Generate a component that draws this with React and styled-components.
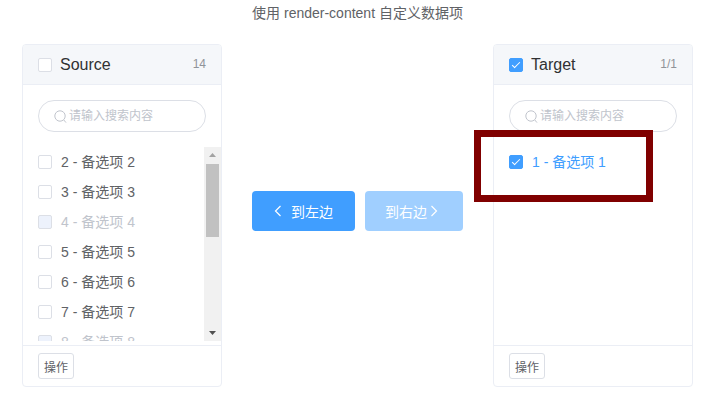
import React from 'react';
import styled, { createGlobalStyle } from 'styled-components';

const Global = createGlobalStyle`
  html, body { margin: 0; padding: 0; background: #fff; }
  body { font-family: "Liberation Sans", "Noto Sans CJK SC", sans-serif; }
  * { box-sizing: border-box; }
`;

const Page = styled.div`
  position: relative;
  width: 715px;
  height: 405px;
  overflow: hidden;
`;
const Caption = styled.p`
  margin: 0;
  height: 44px;
  padding-top: 5px;
  text-align: center;
  font-size: 14px;
  line-height: 16px;
  color: #606266;
`;
const Transfer = styled.div`
  display: flex;
  align-items: center;
  gap: 30px;
  padding: 0 22px;
`;
const Panel = styled.section`
  width: 200px;
  height: 343px;
  flex: none;
  display: flex;
  flex-direction: column;
  border: 1px solid #ebeef5;
  border-radius: 4px;
  overflow: hidden;
`;
const Head = styled.header`
  height: 40px;
  flex: none;
  display: flex;
  align-items: center;
  padding: 0 15px;
  background: #f5f7fa;
  border-bottom: 1px solid #ebeef5;
  color: #303133;
  font-size: 16px;
`;
const Box = styled.span`
  position: relative;
  flex: none;
  width: 14px;
  height: 14px;
  border-radius: 2px;
  border: 1px solid ${p => (p.$checked ? '#409eff' : '#dcdfe6')};
  background: ${p => (p.$checked ? '#409eff' : p.$disabled ? '#edf2fc' : '#fff')};
  &::after {
    content: ${p => (p.$checked ? '""' : 'none')};
    position: absolute;
    left: 4px;
    top: 1px;
    width: 3px;
    height: 7px;
    border: 1px solid #fff;
    border-left: 0;
    border-top: 0;
    transform: rotate(45deg);
  }
`;
const HeadTitle = styled.span`
  margin-left: 8px;
  flex: 1;
`;
const Count = styled.span`
  font-size: 12px;
  color: #909399;
  position: relative;
  top: -1px;
`;
const Filter = styled.div`
  position: relative;
  flex: none;
  margin: 15px;
  height: 32px;
`;
const SearchInput = styled.input`
  display: block;
  width: 100%;
  height: 32px;
  border: 1px solid #dcdfe6;
  border-radius: 16px;
  outline: none;
  padding: 0 10px 0 30px;
  font: 12px "Liberation Sans", "Noto Sans CJK SC", sans-serif;
  background: #fff;
  &::placeholder { color: #c0c4cc; opacity: 1; }
`;
const SearchIcon = styled.svg`
  position: absolute;
  left: 16px;
  top: 10px;
  width: 13px;
  height: 14px;
`;
const ListArea = styled.div`
  flex: none;
  display: flex;
  height: 194px;
`;
const List = styled.ul`
  flex: 1;
  margin: 0;
  padding: 0 0 0 15px;
  list-style: none;
  height: 194px;
  overflow: hidden;
`;
const Item = styled.li`
  height: 30px;
  display: flex;
  align-items: center;
  font-size: 14px;
  color: ${p => (p.$checked ? '#409eff' : p.$disabled ? '#c0c4cc' : '#606266')};
`;
const ItemLabel = styled.span`
  margin-left: 9px;
  padding-bottom: 2px;
`;
const Scrollbar = styled.div`
  width: 17px;
  flex: none;
  height: 194px;
  background: #f1f1f1;
  display: flex;
  flex-direction: column;
  align-items: center;
`;
const Arrow = styled.svg`
  width: 17px;
  height: 17px;
  flex: none;
  margin-top: ${p => (p.$push ? 'auto' : '0')};
`;
const Thumb = styled.div`
  width: 13px;
  height: 73px;
  background: #c1c1c1;
`;
const Foot = styled.footer`
  margin-top: auto;
  height: 41px;
  flex: none;
  border-top: 1px solid #ebeef5;
  padding: 7px 15px;
`;
const SmallButton = styled.button`
  display: block;
  width: 36px;
  height: 26px;
  padding: 0;
  border: 1px solid #dcdfe6;
  border-radius: 3px;
  background: #fff;
  color: #606266;
  font: 12px "Liberation Sans", "Noto Sans CJK SC", sans-serif;
`;
const Actions = styled.div`
  flex: none;
  width: 211px;
  margin-bottom: 10px;
  display: flex;
  gap: 10px;
`;
const Move = styled.button`
  height: 40px;
  width: ${p => p.$w}px;
  flex: none;
  display: flex;
  align-items: center;
  justify-content: center;
  gap: ${p => p.$gap}px;
  padding: 0 ${p => p.$right}px 0 0;
  border: 0;
  border-radius: 4px;
  background: ${p => (p.$off ? '#a0cfff' : '#409eff')};
  color: #fff;
  font: 14px "Liberation Sans", "Noto Sans CJK SC", sans-serif;
`;
const Marker = styled.div`
  position: absolute;
  left: 474px;
  top: 130px;
  width: 179px;
  height: 72px;
  border: 7px solid #800000;
`;

const Chevron = ({ left }) => (
  <svg width="8" height="12" viewBox="0 0 8 12" fill="none" stroke="#fff" strokeWidth="1.2">
    <path d={left ? 'M6.5 1 L1.5 6 L6.5 11' : 'M1.5 1 L6.5 6 L1.5 11'} />
  </svg>
);

function Search() {
  return (
    <Filter>
      <SearchInput placeholder="请输入搜索内容" readOnly />
      <SearchIcon viewBox="0 0 13 14" fill="none" stroke="#c0c4cc" strokeWidth="1">
        <circle cx="6" cy="6" r="5.2" />
        <path d="M9.8 10 L12 12.6" />
      </SearchIcon>
    </Filter>
  );
}

const sourceItems = [
  { n: 2 }, { n: 3 }, { n: 4, off: true }, { n: 5 }, { n: 6 }, { n: 7 }, { n: 8, off: true },
];

export default function App() {
  return (
    <Page>
      <Global />
      <Caption>使用 render-content 自定义数据项</Caption>
      <Transfer>
        <Panel>
          <Head>
            <Box />
            <HeadTitle>Source</HeadTitle>
            <Count>14</Count>
          </Head>
          <Search />
          <ListArea>
            <List>
              {sourceItems.map(i => (
                <Item key={i.n} $disabled={i.off}>
                  <Box $disabled={i.off} />
                  <ItemLabel>{i.n} - 备选项 {i.n}</ItemLabel>
                </Item>
              ))}
            </List>
            <Scrollbar>
              <Arrow viewBox="0 0 17 17"><path d="M8.5 6 L12 10 L5 10 Z" fill="#a3a3a3" /></Arrow>
              <Thumb />
              <Arrow $push viewBox="0 0 17 17"><path d="M5 7 L12 7 L8.5 11 Z" fill="#505050" /></Arrow>
            </Scrollbar>
          </ListArea>
          <Foot><SmallButton>操作</SmallButton></Foot>
        </Panel>
        <Actions>
          <Move $w={103} $gap={9} $right={0}><Chevron left />到左边</Move>
          <Move $w={98} $gap={3} $right={5} $off>到右边<Chevron /></Move>
        </Actions>
        <Panel>
          <Head>
            <Box $checked />
            <HeadTitle>Target</HeadTitle>
            <Count>1/1</Count>
          </Head>
          <Search />
          <ListArea>
            <List>
              <Item $checked>
                <Box $checked />
                <ItemLabel>1 - 备选项 1</ItemLabel>
              </Item>
            </List>
          </ListArea>
          <Foot><SmallButton>操作</SmallButton></Foot>
        </Panel>
      </Transfer>
      <Marker />
    </Page>
  );
}
